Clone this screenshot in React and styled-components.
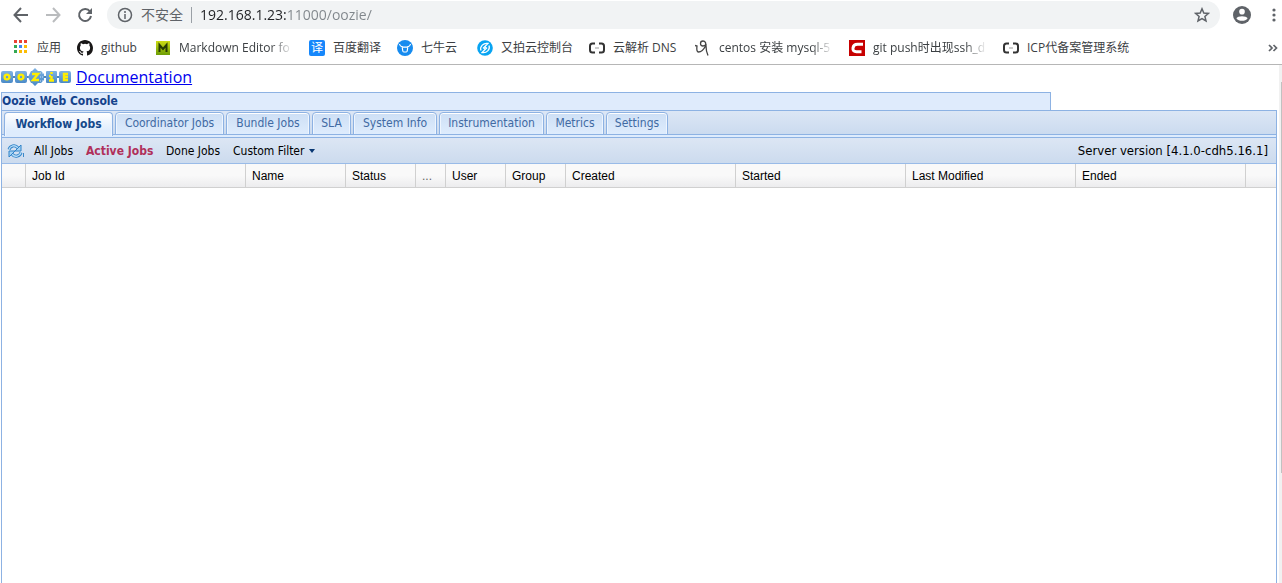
import React, { useState } from "react";
import styled, { createGlobalStyle } from "styled-components";

const GlobalStyle = createGlobalStyle`
  * {
    box-sizing: border-box;
  }
  body {
    margin: 0;
    background: white;
  }
`;

const uiFont = `"Open Sans", "Noto Sans", "Noto Sans CJK SC", sans-serif`;
const extFont = `"DejaVu Sans Condensed", "DejaVu Sans", sans-serif`;

const Page = styled.div`
  display: flex;
  flex-direction: column;
  height: 100vh;
  overflow: hidden;
  font-family: ${uiFont};
`;

/* browser bar */
const NavBar = styled.div`
  display: flex;
  align-items: center;
  height: 30px;
  padding: 0 0 0 11px;
`;
const IconButton = styled.button`
  display: flex;
  align-items: center;
  justify-content: center;
  width: ${(props) => props.$width || 20}px;
  height: 20px;
  margin: 0 ${(props) => props.$after || 0}px 0 0;
  padding: 0;
  border: 0;
  background: none;
  color: ${(props) => props.$color || "#5f6368"};
`;
const AddressBar = styled.div`
  display: flex;
  flex: 1;
  align-items: center;
  height: 28px;
  padding: 0 8px 0 10px;
  border-radius: 14px;
  background: #f1f3f4;
`;
const Security = styled.label`
  padding: 0 8px 0 8px;
  font-size: 14px;
  line-height: 20px;
  color: #5f6368;
`;
const Divider = styled.span`
  width: 1px;
  height: 16px;
  margin-right: 8px;
  background: #9aa0a6;
`;
const Address = styled.input`
  flex: 1;
  min-width: 0;
  height: 24px;
  padding: 0 0 2px;
  border: 0;
  outline: 0;
  font-family: ${uiFont};
  font-size: 14px;
  color: transparent;
  background: linear-gradient(to right, #202124 86px, #80868b 86px);
  background-clip: text;
`;
const Bookmarks = styled.nav`
  display: flex;
  align-items: center;
  gap: 16px;
  height: 35px;
  padding: 1px 1px 0 13px;
  border-bottom: 1px solid #b6b6b6;
`;
const BookmarkLink = styled.a`
  display: flex;
  flex: none;
  align-items: center;
  gap: 8px;
  color: #3c4043;
  font-size: 12px;
  line-height: 18px;
  text-decoration: none;
  & svg {
    flex: none;
  }
`;
const BookmarkName = styled.span`
  width: ${(props) => props.$width}px;
  white-space: nowrap;
  ${(props) => props.$fade && "mask-image: linear-gradient(to left, transparent, black 22px);"}
`;
const More = styled.div`
  display: flex;
  flex: 1;
  justify-content: flex-end;
`;

/* page under the browser bar */
const Viewport = styled.div`
  display: flex;
  flex: 1;
  min-height: 0;
`;
const Content = styled.main`
  display: flex;
  flex: 1;
  flex-direction: column;
  min-width: 0;
  padding: 0 2px 0 1px;
`;
const ScrollTrack = styled.div`
  width: 3px;
  padding: 17px 0 0 2px;
  background: #f1f1f1;
`;
const ScrollThumb = styled.div`
  height: 78%;
  background: #c1c1c1;
`;
const Header = styled.header`
  display: flex;
  align-items: center;
  gap: 5px;
  height: 27px;
  padding-bottom: 3px;
  & a {
    font-size: 16px;
    line-height: 22px;
    color: #0000ee;
  }
`;
const Title = styled.h1`
  width: 82.3%;
  height: 18px;
  margin: 0;
  border: 1px solid #8db2e3;
  border-bottom: 0;
  background: #dfebfc;
  color: #15428b;
  font-family: ${extFont};
  font-size: 12px;
  line-height: 16px;
`;
const Panel = styled.section`
  display: flex;
  flex: 1;
  flex-direction: column;
  border: 1px solid #8db2e3;
  border-bottom: 0;
  font-family: ${extFont};
`;
const TabStrip = styled.div`
  display: flex;
  align-items: flex-end;
  gap: 2px;
  height: 27px;
  padding: 0 2px;
  border-bottom: 1px solid #8db2e3;
  background: linear-gradient(
    #dce6f5 0,
    #cbdbef 23px,
    #8db2e3 23px,
    #8db2e3 24px,
    #deecfd 24px
  );
`;
const Tab = styled.button`
  width: ${(props) => props.$width}px;
  height: ${(props) => (props.$active ? 24 : 23)}px;
  margin-bottom: ${(props) => (props.$active ? 1 : 2)}px;
  padding: 0 0 1px;
  border: 1px solid #8db2e3;
  border-bottom: ${(props) => (props.$active ? "0" : "1px solid #8db2e3")};
  border-radius: 4px 4px 0 0;
  box-shadow: inset 0 1px white, inset 1px 0 #eef5fe, inset -1px 0 #eef5fe;
  background: ${(props) =>
    props.$active ? "linear-gradient(white, #deecfd 18px)" : "linear-gradient(#cddff5, #deecfd)"};
  color: ${(props) => (props.$active ? "#15498b" : "#416aa3")};
  font-family: ${extFont};
  font-size: 12px;
  font-weight: ${(props) => (props.$active ? "bold" : "normal")};
  line-height: 20px;
  white-space: nowrap;
`;
const Toolbar = styled.div`
  display: flex;
  align-items: center;
  height: 26px;
  padding: 0 8px 0 5px;
  border-bottom: 1px solid #99bbe8;
  background: linear-gradient(#dce6f4, #ccdbee);
`;
const ToolButton = styled.button`
  display: flex;
  align-items: center;
  gap: 5px;
  width: ${(props) => props.$width}px;
  height: 22px;
  padding: 0;
  border: 0;
  background: none;
  color: ${(props) => (props.$hot ? "#b0305a" : "#000")};
  font-family: ${extFont};
  font-size: 12px;
  font-weight: ${(props) => (props.$hot ? "bold" : "normal")};
  white-space: nowrap;
`;
const Version = styled.span`
  margin-left: auto;
  font-size: 13px;
  line-height: 16px;
`;
const Grid = styled.table`
  width: 100%;
  table-layout: fixed;
  border-collapse: separate;
  border-spacing: 0;
  font-family: "Liberation Sans", Arial, sans-serif;
  font-size: 12px;
`;
const HeadCell = styled.th`
  width: ${(props) => (props.$width ? `${props.$width}px` : "auto")};
  height: 24px;
  padding: 0 6px;
  border-right: ${(props) => (props.$width ? "1px solid #d0d0d0" : "0")};
  border-bottom: 1px solid #d0d0d0;
  background: linear-gradient(#f9f9f9 50%, #ececee);
  color: ${(props) => (props.$dim ? "#666" : "#000")};
  font-weight: normal;
  text-align: left;
`;

const Icon = ({ size = 16, children, ...rest }) => (
  <svg width={size} height={size} viewBox="0 0 16 16" fill="none" aria-hidden="true" {...rest}>
    {children}
  </svg>
);

const AppsIcon = () => (
  <Icon>
    {["#ea4335", "#ea4335", "#ea4335", "#34a853", "#4285f4", "#fbbc05", "#34a853", "#fbbc05", "#fbbc05"].map(
      (color, i) => (
        <rect key={i} x={1 + (i % 3) * 5} y={Math.floor(i / 3) * 5} width="3" height="3" fill={color} />
      )
    )}
  </Icon>
);
const GithubIcon = () => (
  <Icon>
    <path
      fill="#191717"
      d="M8 0C3.58 0 0 3.58 0 8c0 3.54 2.29 6.53 5.47 7.59.4.07.55-.17.55-.38v-1.49c-2.01.37-2.53-.49-2.69-.94-.09-.23-.48-.94-.82-1.13-.28-.15-.68-.52-.01-.53.63-.01 1.08.58 1.23.82.72 1.21 1.87.87 2.33.66.07-.52.28-.87.51-1.07-1.78-.2-3.64-.89-3.64-3.95 0-.87.31-1.59.82-2.15-.08-.2-.36-1.02.08-2.12 0 0 .67-.21 2.2.82a7.6 7.6 0 0 1 4 0c1.53-1.04 2.2-.82 2.2-.82.44 1.1.16 1.92.08 2.12.51.56.82 1.27.82 2.15 0 3.07-1.87 3.75-3.65 3.95.29.25.54.73.54 1.48v2.2c0 .21.15.46.55.38A8 8 0 0 0 16 8c0-4.42-3.58-8-8-8z"
    />
  </Icon>
);
const MarkdownIcon = () => (
  <Icon>
    <defs>
      <linearGradient id="md" x2="0" y2="1">
        <stop stopColor="#cddc16" />
        <stop offset="1" stopColor="#6c9d05" />
      </linearGradient>
    </defs>
    <rect x="1" y="1" width="14" height="14" fill="url(#md)" />
    <path d="M4.5 12V5L8 9l3.5-4v7" stroke="#263b05" strokeWidth="2" />
  </Icon>
);
const TranslateIcon = () => (
  <Icon>
    <rect width="16" height="16" rx="2" fill="#1687fb" />
    <text x="8" y="12" textAnchor="middle" fill="white" fontSize="12" fontFamily="Noto Sans CJK SC">
      译
    </text>
  </Icon>
);
const QiniuIcon = () => (
  <Icon>
    <circle cx="8" cy="8" r="8" fill="#168bef" />
    <path d="M2.5 4c.5 2.500 2 3.200 5.500 3.200S13 6.500 13.500 4M5 6l.8 5q.2 1 1 1h2.400q.8 0 1-1l.8-5" stroke="white" strokeWidth="1.200" />
  </Icon>
);
const UpyunIcon = () => (
  <Icon>
    <circle cx="8" cy="8" r="7.8" fill="#08a4f2" />
    <path
      d="M4 10.500C2.500 6.500 6.500 2.500 11 3.500L6.500 8l1.500 1M12 5.500c1.500 4-2.500 8-7 7L9.500 8 8 7"
      stroke="white"
      strokeWidth="1.300"
    />
  </Icon>
);
const AliyunIcon = () => (
  <Icon>
    <path
      d="M6 3.500H3.500Q1 3.500 1 6v4q0 2.500 2.500 2.500H6M10 3.500h2.500Q15 3.500 15 6v4q0 2.500-2.500 2.500H10"
      stroke="#333"
      strokeWidth="2"
    />
    <path d="M6 8h4" stroke="#999" />
  </Icon>
);
const BlogIcon = () => (
  <Icon>
    <path
      d="M0 5.500l2 .5c-.5 4 0 6 1.500 6C6 12 9 9 10.500 6c.8-3-.3-5-2.500-5-1.500 0-2.500 1-2.500 2.500S6.500 6 8 6s2.500-1 3-2c-.2 4 .5 8 2 11.500"
      stroke="#444"
      strokeWidth="1.300"
    />
  </Icon>
);
const CsdnIcon = () => (
  <Icon>
    <rect width="16" height="16" fill="#c70000" />
    <path d="M14 4.200H8.500Q4.500 4.200 4 8t3.500 3.800h5" stroke="white" strokeWidth="3" />
  </Icon>
);

const OozieLogo = () => (
  <svg width="70" height="18" viewBox="0 0 70 18" role="img" aria-label="Oozie">
    <defs>
      <linearGradient id="tile" x2="0" y2="1">
        <stop stopColor="#7fb2e2" />
        <stop offset="1" stopColor="#4a8ac8" />
      </linearGradient>
    </defs>
    <path d="M11 9h48" stroke="#4f84b8" strokeWidth="2" />
    <g fill="url(#tile)">
      <rect x="0" y="3" width="12" height="12" rx="2" />
      <rect x="14" y="3" width="12" height="12" rx="2" />
      <path d="M34 0l3 3h3l3 3v6l-3 3h-3l-3 3-3-3h-1l-3-6 3-6h1z" />
      <rect x="45" y="3" width="11" height="12" rx="1" />
      <rect x="58" y="3" width="12" height="12" rx="2" />
    </g>
    <path d="M39 5h4M39 9h4M39 13h4" stroke="#cfe4f8" strokeDasharray="1 1" />
    <g fill="none" stroke="#ffee00" strokeWidth="2.400">
      <circle cx="6" cy="9" r="2.400" />
      <circle cx="20" cy="9" r="2.400" />
      <path d="M31 6h6l-5 6h6M50.500 4v2M50.500 8v5M48 8h2M48 12.500h5M67 6h-4v6h4M63 9h4" />
    </g>
  </svg>
);
const RefreshIcon = () => (
  <svg width="18" height="16" viewBox="0 0 18 16" fill="none" aria-hidden="true">
    <path d="M2 6.500C3 3 8 1 11 5M14 9.500C13 13 8 15 5 11" stroke="#2f82c8" strokeWidth="3" />
    <path d="M2 6.500C3 3 8 1 11 5M14 9.500C13 13 8 15 5 11" stroke="#b5dcf7" strokeWidth="1.400" />
    <path d="M14 2v6H8zM2 14V8h6z" fill="#a5d3f4" stroke="#2f82c8" />
    <path d="M16.500 10v4" stroke="#3989c9" />
  </svg>
);

const bookmarks = [
  { name: "应用", icon: AppsIcon, width: 24 },
  { name: "github", icon: GithubIcon, width: 38 },
  { name: "Markdown Editor fo", icon: MarkdownIcon, width: 114, fade: true },
  { name: "百度翻译", icon: TranslateIcon, width: 48 },
  { name: "七牛云", icon: QiniuIcon, width: 40 },
  { name: "又拍云控制台", icon: UpyunIcon, width: 72 },
  { name: "云解析 DNS", icon: AliyunIcon, width: 66 },
  { name: "centos 安装 mysql-5", icon: BlogIcon, width: 114, fade: true },
  { name: "git push时出现ssh_d", icon: CsdnIcon, width: 114, fade: true },
  { name: "ICP代备案管理系统", icon: AliyunIcon, width: 108 },
];

const tabs = [
  ["Workflow Jobs", 109],
  ["Coordinator Jobs", 109],
  ["Bundle Jobs", 84],
  ["SLA", 39],
  ["System Info", 84],
  ["Instrumentation", 105],
  ["Metrics", 58],
  ["Settings", 62],
];

const columns = [
  ["", 24],
  ["Job Id", 220],
  ["Name", 100],
  ["Status", 70],
  ["...", 30],
  ["User", 60],
  ["Group", 60],
  ["Created", 170],
  ["Started", 170],
  ["Last Modified", 170],
  ["Ended", 170],
  ["", 0],
];

const BrowserBar = () => {
  const [url, setUrl] = useState("192.168.1.23:11000/oozie/");
  return (
    <>
      <NavBar>
        <IconButton $after={12} aria-label="Back">
          <Icon stroke="currentColor" strokeWidth="2">
            <path d="M15 8H2M8 1L1.500 8 8 15" />
          </Icon>
        </IconButton>
        <IconButton $after={12} $color="#babcbe" aria-label="Forward">
          <Icon stroke="currentColor" strokeWidth="2">
            <path d="M1 8h13M8 1l6.500 7L8 15" />
          </Icon>
        </IconButton>
        <IconButton $after={12} aria-label="Reload">
          <Icon stroke="currentColor" strokeWidth="2">
            <path d="M13 4.500A6 6 0 1 0 14 9" />
            <path d="M15 1v6H9z" fill="currentColor" stroke="none" />
          </Icon>
        </IconButton>
        <AddressBar>
          <Icon stroke="#5f6368" strokeWidth="1.500">
            <circle cx="8" cy="8" r="6.500" />
            <path d="M8 7v5M8 4v2" />
          </Icon>
          <Security htmlFor="address">不安全</Security>
          <Divider />
          <Address id="address" value={url} spellCheck={false} onChange={(e) => setUrl(e.target.value)} />
          <IconButton aria-label="Bookmark this page">
            <Icon stroke="currentColor" strokeWidth="1.500">
              <path d="M8 1.800l1.800 4.200 4.600.4-3.500 3 1.100 4.500-4-2.400-4 2.400 1.100-4.500-3.500-3 4.600-.4z" />
            </Icon>
          </IconButton>
        </AddressBar>
        <IconButton $width={44} aria-label="Profile">
          <Icon size={18}>
            <circle cx="8" cy="8" r="8" fill="#5f6368" />
            <circle cx="8" cy="5" r="2.500" fill="white" />
            <path d="M3 10.800C4 8.400 12 8.400 13 10.800 11 14 5 14 3 10.800z" fill="white" />
          </Icon>
        </IconButton>
        <IconButton $width={18} aria-label="Menu">
          <Icon>
            <circle cx="9" cy="3" r="1.600" fill="#5f6368" />
            <circle cx="9" cy="8" r="1.600" fill="#5f6368" />
            <circle cx="9" cy="13" r="1.600" fill="#5f6368" />
          </Icon>
        </IconButton>
      </NavBar>
      <Bookmarks>
        {bookmarks.map(({ name, icon: Mark, width, fade }) => (
          <BookmarkLink key={name} href="#">
            <Mark />
            <BookmarkName $width={width} $fade={fade}>
              {name}
            </BookmarkName>
          </BookmarkLink>
        ))}
        <More>
          <IconButton $width={16} aria-label="More bookmarks">
            <Icon stroke="#5f6368" strokeWidth="1.700">
              <path d="M4 5l3 3-3 3M8.500 5l3 3-3 3" />
            </Icon>
          </IconButton>
        </More>
      </Bookmarks>
    </>
  );
};

const App = () => {
  const [active, setActive] = useState("Workflow Jobs");
  return (
    <Page>
      <GlobalStyle />
      <BrowserBar />
      <Viewport>
        <Content>
          <Header>
            <OozieLogo />
            <a href="#docs">Documentation</a>
          </Header>
          <Title>Oozie Web Console</Title>
          <Panel>
            <TabStrip role="tablist">
              {tabs.map(([name, width]) => (
                <Tab
                  key={name}
                  role="tab"
                  aria-selected={name === active}
                  $active={name === active}
                  $width={width}
                  onClick={() => setActive(name)}
                >
                  {name}
                </Tab>
              ))}
            </TabStrip>
            <Toolbar>
              <ToolButton $width={27} aria-label="Refresh">
                <RefreshIcon />
              </ToolButton>
              <ToolButton $width={52}>All Jobs</ToolButton>
              <ToolButton $width={80} $hot>
                Active Jobs
              </ToolButton>
              <ToolButton $width={67}>Done Jobs</ToolButton>
              <ToolButton $width={90}>
                Custom Filter
                <svg width="6" height="4" viewBox="0 0 6 4" aria-hidden="true">
                  <path d="M0 0h6L3 4z" fill="#083772" />
                </svg>
              </ToolButton>
              <Version>Server version [4.1.0-cdh5.16.1]</Version>
            </Toolbar>
            <Grid>
              <thead>
                <tr>
                  {columns.map(([name, width], i) => (
                    <HeadCell key={i} $width={width} $dim={name === "..."}>
                      {name}
                    </HeadCell>
                  ))}
                </tr>
              </thead>
            </Grid>
          </Panel>
        </Content>
        <ScrollTrack>
          <ScrollThumb />
        </ScrollTrack>
      </Viewport>
    </Page>
  );
};
export default App;
